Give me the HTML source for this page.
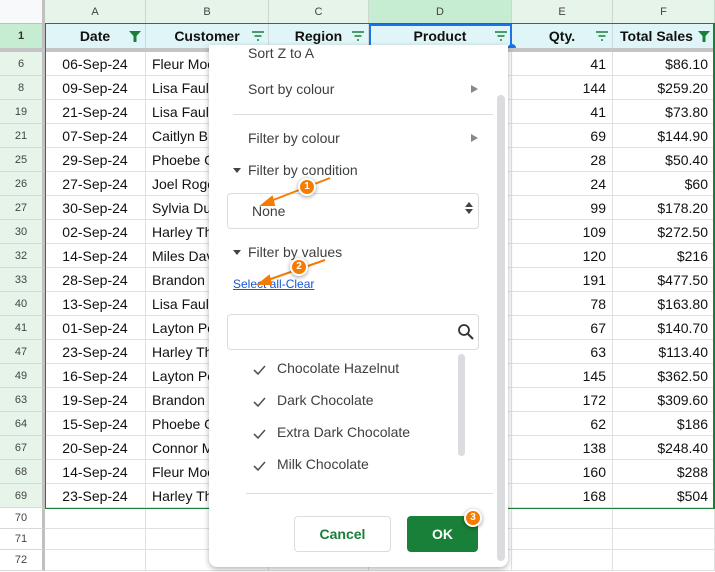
<!DOCTYPE html>
<html><head><style>
*{margin:0;padding:0;box-sizing:border-box}
body{width:715px;height:572px;overflow:hidden;background:#fff;font-family:"Liberation Sans",Arial,sans-serif;position:relative}
.a{position:absolute}
.c{position:absolute;white-space:nowrap;overflow:hidden}
.t{position:absolute;white-space:nowrap;font-size:14px;color:#3c4043}
.badge{position:absolute;width:18px;height:18px;border-radius:50%;background:#f57c00;border:2px solid #fff;box-shadow:0 1px 4px rgba(0,0,0,.4);color:#fff;font-size:10px;font-weight:bold;text-align:center;line-height:14px}
</style></head><body>
<div id="g"></div>
<script>
var cols=[0,45,146,269,369,512,613,715];
var h='';
// column header
h+='<div class="a" style="left:0;top:0;width:715px;height:24px;background:#e6f4ea"></div>';
h+='<div class="a" style="left:0;top:0;width:45px;height:24px;background:#f8f9fa;border-right:3px solid #c0c0c0;border-bottom:1px solid #c0c0c0"></div>';
h+='<div class="a" style="left:369px;top:0;width:143px;height:24px;background:#c6ecd2"></div>';
var L=['A','B','C','D','E','F'];
for(var i=0;i<6;i++){h+='<div class="c" style="left:'+cols[i+1]+'px;top:0;width:'+(cols[i+2]-cols[i+1])+'px;height:24px;line-height:24px;text-align:center;font-size:11px;color:#444;border-right:1px solid #c8d8cc">'+L[i]+'</div>';}
// header row 1
h+='<div class="a" style="left:0;top:24px;width:45px;height:24px;background:#c6ecd2;color:#333;font-size:11px;font-weight:bold;text-align:center;line-height:24px;border-right:3px solid #c0c0c0">1</div>';
h+='<div class="a" style="left:45px;top:24px;width:670px;height:24px;background:#e0f5f7"></div>';
var H=['Date','Customer','Region','Product','Qty.','Total Sales'];
var filled=[1,0,0,0,0,1];
for(var i=0;i<6;i++){var x=cols[i+1],w=cols[i+2]-x;
 var off=i==5?-10:0;
 h+='<div class="c" style="left:'+x+'px;top:24px;width:'+w+'px;height:24px;line-height:24px;text-align:center;font-size:14px;font-weight:bold;color:#111;border-right:1px solid #d0d8d8;padding-left:'+(i==5?0:0)+'px;padding-right:'+(i==5?14:0)+'px">'+H[i]+'</div>';
 var fx=x+w-18;
 if(filled[i]) h+='<svg class="a" style="left:'+fx+'px;top:30px" width="14" height="13"><path d="M1 1H13L8.5 6V12H5.5V6Z" fill="#188038"/></svg>';
 else h+='<svg class="a" style="left:'+fx+'px;top:30px" width="14" height="12"><path d="M1 2H13M3.5 6H10.5M6 10H8" stroke="#188038" stroke-width="1.5"/></svg>';
}
h+='<div class="a" style="left:369px;top:24px;width:143px;height:24px;border:2px solid #1a73e8"></div>';
h+='<div class="a" style="left:508px;top:44px;width:8px;height:8px;border-radius:50%;background:#1a73e8"></div>';
// frozen line
h+='<div class="a" style="left:0;top:48px;width:715px;height:4px;background:#c4c4c4"></div>';
var D=[[6,'06-Sep-24','Fleur Moore',41,'$86.10'],[8,'09-Sep-24','Lisa Faulkner',144,'$259.20'],[19,'21-Sep-24','Lisa Faulkner',41,'$73.80'],[21,'07-Sep-24','Caitlyn Bruce',69,'$144.90'],[25,'29-Sep-24','Phoebe Gour',28,'$50.40'],[26,'27-Sep-24','Joel Rogers',24,'$60'],[27,'30-Sep-24','Sylvia Dunn',99,'$178.20'],[30,'02-Sep-24','Harley Thomas',109,'$272.50'],[32,'14-Sep-24','Miles Davis',120,'$216'],[33,'28-Sep-24','Brandon Wise',191,'$477.50'],[40,'13-Sep-24','Lisa Faulkner',78,'$163.80'],[41,'01-Sep-24','Layton Pope',67,'$140.70'],[47,'23-Sep-24','Harley Thomas',63,'$113.40'],[49,'16-Sep-24','Layton Pope',145,'$362.50'],[63,'19-Sep-24','Brandon Wise',172,'$309.60'],[64,'15-Sep-24','Phoebe Gour',62,'$186'],[67,'20-Sep-24','Connor Mills',138,'$248.40'],[68,'14-Sep-24','Fleur Moore',160,'$288'],[69,'23-Sep-24','Harley Thomas',168,'$504']];
for(var r=0;r<D.length;r++){var y=52+24*r,d=D[r];
 h+='<div class="a" style="left:0;top:'+y+'px;width:45px;height:24px;background:#e6f4ea;border-right:3px solid #c0c0c0;border-bottom:1px solid #d8d8d8;font-size:11px;color:#444;text-align:center;line-height:24px">'+d[0]+'</div>';
 var vals=[d[1],d[2],'','',d[3],d[4]];
 for(var i=0;i<6;i++){var x=cols[i+1],w=cols[i+2]-x;var al=i==0?'center':(i>=4?'right':'left');
  h+='<div class="c" style="left:'+x+'px;top:'+y+'px;width:'+w+'px;height:24px;line-height:24px;font-size:14px;color:#111;text-align:'+al+';padding:0 6px;border-right:1px solid #e0e0e0;border-bottom:1px solid #e0e0e0">'+vals[i]+'</div>';}
}
for(var k=0;k<3;k++){var y=508+21*k;
 h+='<div class="a" style="left:0;top:'+y+'px;width:45px;height:21px;background:#fff;border-right:3px solid #c0c0c0;border-bottom:1px solid #d8d8d8;font-size:11px;color:#444;text-align:center;line-height:21px">'+(70+k)+'</div>';
 for(var i=0;i<6;i++){var x=cols[i+1],w=cols[i+2]-x;h+='<div class="a" style="left:'+x+'px;top:'+y+'px;width:'+w+'px;height:21px;border-right:1px solid #e0e0e0;border-bottom:1px solid #e0e0e0"></div>';}
}
// green table border
h+='<div class="a" style="left:45px;top:24px;width:670px;height:485px;border:1px solid #188038;border-right:2px solid #188038;border-top:0"></div>';
h+='<div class="a" style="left:45px;top:23px;width:670px;height:1px;background:#188038"></div>';
document.getElementById('g').innerHTML=h;
</script>
<!-- popup -->
<div class="a" style="left:209px;top:45px;width:299px;height:522px;background:#fff;border-radius:0 0 8px 8px;box-shadow:0 2px 6px rgba(0,0,0,.3)">
</div>
<div class="t" style="left:248px;top:45px">Sort Z to A</div>
<div class="t" style="left:248px;top:81px">Sort by colour</div>
<div class="a" style="left:471px;top:85px;width:0;height:0;border-left:7px solid #888;border-top:4px solid transparent;border-bottom:4px solid transparent"></div>
<div class="a" style="left:233px;top:114px;width:260px;height:1px;background:#dadce0"></div>
<div class="t" style="left:248px;top:130px">Filter by colour</div>
<div class="a" style="left:471px;top:134px;width:0;height:0;border-left:7px solid #888;border-top:4px solid transparent;border-bottom:4px solid transparent"></div>
<div class="a" style="left:233px;top:168px;border-top:5px solid #444;border-left:4px solid transparent;border-right:4px solid transparent"></div>
<div class="t" style="left:248px;top:162px">Filter by condition</div>
<div class="a" style="left:227px;top:193px;width:252px;height:36px;border:1px solid #dadce0;border-radius:4px"></div>
<div class="t" style="left:252px;top:203px">None</div>
<div class="a" style="left:465px;top:202px;border-bottom:5px solid #444;border-left:4px solid transparent;border-right:4px solid transparent"></div>
<div class="a" style="left:465px;top:209px;border-top:5px solid #444;border-left:4px solid transparent;border-right:4px solid transparent"></div>
<div class="a" style="left:233px;top:250px;border-top:5px solid #444;border-left:4px solid transparent;border-right:4px solid transparent"></div>
<div class="t" style="left:248px;top:244px">Filter by values</div>
<div class="t" style="left:233px;top:277px;font-size:12px;color:#1a55d0;text-decoration:underline">Select all-Clear</div>
<div class="a" style="left:227px;top:314px;width:252px;height:36px;border:1px solid #dadce0;border-radius:4px"></div>
<svg class="a" style="left:457px;top:323px" width="18" height="18"><circle cx="7" cy="7" r="5" fill="none" stroke="#333" stroke-width="1.8"/><path d="M10.5 10.5L16 16" stroke="#333" stroke-width="2"/></svg>
<div class="a" style="left:458px;top:354px;width:7px;height:102px;background:#dadce0;border-radius:4px"></div>
<svg class="a" style="left:252px;top:362px" width="16" height="110"><g fill="none" stroke="#555" stroke-width="1.6"><path d="M2 8L6 12L13 4"/><path d="M2 40L6 44L13 36"/><path d="M2 72L6 76L13 68"/><path d="M2 104L6 108L13 100"/></g></svg>
<div class="t" style="left:277px;top:360px">Chocolate Hazelnut</div>
<div class="t" style="left:277px;top:392px">Dark Chocolate</div>
<div class="t" style="left:277px;top:424px">Extra Dark Chocolate</div>
<div class="t" style="left:277px;top:456px">Milk Chocolate</div>
<div class="a" style="left:246px;top:493px;width:247px;height:1px;background:#dadce0"></div>
<div class="a" style="left:294px;top:516px;width:97px;height:36px;border:1px solid #dadce0;border-radius:4px;color:#188038;font-size:14px;font-weight:bold;text-align:center;line-height:34px">Cancel</div>
<div class="a" style="left:407px;top:516px;width:71px;height:36px;background:#188038;border-radius:4px;color:#fff;font-size:14px;font-weight:bold;text-align:center;line-height:36px">OK</div>
<div class="a" style="left:497px;top:95px;width:8px;height:466px;background:#dadce0;border-radius:4px"></div>
<!-- annotations -->
<svg class="a" style="left:0;top:0" width="715" height="572"><g stroke="#f57c00" stroke-width="2" fill="#f57c00">
<path d="M330 178L268 202" fill="none"/><path d="M262 205L272 197L274 205Z"/>
<path d="M325 260L265 281" fill="none"/><path d="M259 284L269 276L271 284Z"/></g></svg>
<div class="badge" style="left:298px;top:178px">1</div>
<div class="badge" style="left:290px;top:258px">2</div>
<div class="badge" style="left:464px;top:509px">3</div>
</body></html>
